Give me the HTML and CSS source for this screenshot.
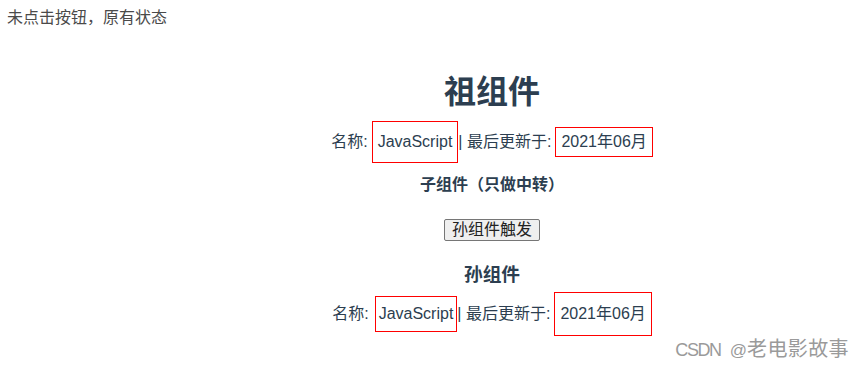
FILE: index.html
```html
<!DOCTYPE html>
<html lang="zh-CN">
<head>
    <meta charset="UTF-8">
    <meta name="viewport" content="width=device-width, initial-scale=1.0">
    <title>provide / inject 示例</title>
    <link rel="stylesheet" href="styles.css">
</head>
<body>
    <p class="note">未点击按钮，原有状态</p>
    <div id="app">
        <h1 class="title">祖组件</h1>
        <div class="info">
            <span class="label">名称:</span>
            <span class="box name-a">JavaScript</span>
            <span class="label">| 最后更新于:</span>
            <span class="box date-a">2021年06月</span>
        </div>
        <div class="child">
            <h4 class="child-title">子组件（只做中转）</h4>
            <div class="btn-row">
                <button class="trigger" onclick="update()">孙组件触发</button>
            </div>
            <div class="grandson">
                <h3 class="grandson-title">孙组件</h3>
                <div class="info info-b">
                    <span class="label">名称:</span>
                    <span class="box name-b" id="name">JavaScript</span>
                    <span class="label">| 最后更新于:</span>
                    <span class="box date-b" id="date">2021年06月</span>
                </div>
            </div>
        </div>
    </div>
    <div class="watermark"><span class="wm-latin">CSDN</span> <span class="wm-at">@</span><span class="wm-cjk">老电影故事</span></div>

    <script>
        function update() {
            document.getElementById('name').innerText = 'Vue.js';
            document.getElementById('date').innerText = '2021年07月';
        }
    </script>
</body>
</html>
```

FILE: styles.css
```css
body { margin: 0; font-family: "Liberation Sans", Arial, "Noto Sans CJK SC", sans-serif; background: #fff; }
.note { margin: 0; padding: 8px 0 0 7px; height: 20px; line-height: 20px; font-size: 16px; color: #4a4a4a; }

#app { padding-left: 124px; text-align: center; color: #2c3e50; }
.title { margin: 44px 0 0; font-size: 32px; line-height: 40px; font-weight: bold; }

.info { display: flex; justify-content: center; align-items: center; margin-top: 9px; font-size: 16px; line-height: 20px; }
.label { margin-right: 4px; }
.box { border: 1px solid red; padding: 0 4px; }
.name-a { padding: 10px 5px; }
.date-a { padding: 4px 5px; }
.name-b { padding: 7px 3px; margin-left: 2px; }
.date-b { padding: 11px 5px; }

.child-title { margin: 12px 0 0; font-size: 16px; line-height: 20px; font-weight: bold; }
.btn-row { margin-top: 24px; height: 22px; }
.trigger {
    font-family: "Liberation Sans", Arial, "Noto Sans CJK SC", sans-serif;
    font-size: 16px;
    line-height: 18px;
    padding: 1px 7px;
    color: #222;
    background-color: #efefef;
    border: 1px solid #767676;
    border-radius: 2px;
    cursor: pointer;
}
.grandson-title { margin: 22px 0 0; font-size: 18.72px; line-height: 24px; font-weight: bold; }
.info-b { margin-top: 5px; }

.watermark {
    position: absolute;
    right: 11px;
    top: 337px;
    color: #9a9a9a;
    text-shadow: 0 0 1px #fff;
    line-height: 24px;
    font-size: 18px;
    white-space: nowrap;
}
.wm-latin { letter-spacing: -1.4px; margin-right: 4px; }
.wm-at { font-size: 17px; }
.wm-cjk { font-size: 20px; letter-spacing: 0.4px; }
```
